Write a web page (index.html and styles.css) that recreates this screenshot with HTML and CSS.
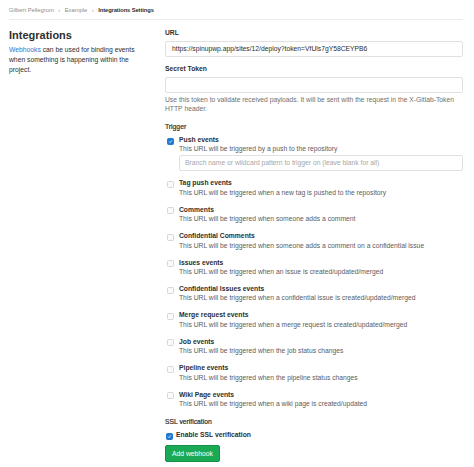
FILE: index.html
```html
<!DOCTYPE html>
<html lang="en">
<head>
    <meta charset="UTF-8">
    <meta name="viewport" content="width=device-width, initial-scale=1.0">
    <title>Integrations Settings</title>
    <link rel="stylesheet" href="styles.css">
</head>
<body>
    <div class="page">
        <div class="breadcrumb">
            <span>Gilbert Pellegrom</span>
            <span class="sep">›</span>
            <span>Example</span>
            <span class="sep">›</span>
            <span class="current">Integrations Settings</span>
        </div>

        <div class="layout">
            <div class="intro">
                <h1 class="title">Integrations</h1>
                <p class="lead"><a href="#">Webhooks</a> can be used for binding events when something is happening within the project.</p>
            </div>

            <form class="form">
                <label class="label strong">URL</label>
                <div class="input">https://spinupwp.app/sites/12/deploy?token=VfUls7gY58CEYPB6</div>

                <label class="label strong gap">Secret Token</label>
                <div class="input"></div>
                <p class="help">Use this token to validate received payloads. It will be sent with the request in the X-Gitlab-Token HTTP header.</p>

                <label class="label section">Trigger</label>

                <div class="event first">
                    <span class="box checked"><svg viewBox="0 0 8 8"><path d="M1.8 4.2 L3.3 5.7 L6.3 2.3" fill="none" stroke="#fff" stroke-width="1.3"/></svg></span>
                    <div class="event-body">
                        <div class="event-name">Push events</div>
                        <div class="event-desc">This URL will be triggered by a push to the repository</div>
                        <div class="input branch">Branch name or wildcard pattern to trigger on (leave blank for all)</div>
                    </div>
                </div>

                <div class="event">
                    <span class="box"></span>
                    <div class="event-body">
                        <div class="event-name">Tag push events</div>
                        <div class="event-desc">This URL will be triggered when a new tag is pushed to the repository</div>
                    </div>
                </div>

                <div class="event">
                    <span class="box"></span>
                    <div class="event-body">
                        <div class="event-name">Comments</div>
                        <div class="event-desc">This URL will be triggered when someone adds a comment</div>
                    </div>
                </div>

                <div class="event">
                    <span class="box"></span>
                    <div class="event-body">
                        <div class="event-name">Confidential Comments</div>
                        <div class="event-desc">This URL will be triggered when someone adds a comment on a confidential issue</div>
                    </div>
                </div>

                <div class="event">
                    <span class="box"></span>
                    <div class="event-body">
                        <div class="event-name">Issues events</div>
                        <div class="event-desc">This URL will be triggered when an issue is created/updated/merged</div>
                    </div>
                </div>

                <div class="event">
                    <span class="box"></span>
                    <div class="event-body">
                        <div class="event-name">Confidential Issues events</div>
                        <div class="event-desc">This URL will be triggered when a confidential issue is created/updated/merged</div>
                    </div>
                </div>

                <div class="event">
                    <span class="box"></span>
                    <div class="event-body">
                        <div class="event-name">Merge request events</div>
                        <div class="event-desc">This URL will be triggered when a merge request is created/updated/merged</div>
                    </div>
                </div>

                <div class="event">
                    <span class="box"></span>
                    <div class="event-body">
                        <div class="event-name">Job events</div>
                        <div class="event-desc">This URL will be triggered when the job status changes</div>
                    </div>
                </div>

                <div class="event">
                    <span class="box"></span>
                    <div class="event-body">
                        <div class="event-name">Pipeline events</div>
                        <div class="event-desc">This URL will be triggered when the pipeline status changes</div>
                    </div>
                </div>

                <div class="event">
                    <span class="box"></span>
                    <div class="event-body">
                        <div class="event-name">Wiki Page events</div>
                        <div class="event-desc">This URL will be triggered when a wiki page is created/updated</div>
                    </div>
                </div>

                <label class="label section ssl">SSL verification</label>
                <div class="ssl-row">
                    <span class="box checked"><svg viewBox="0 0 8 8"><path d="M1.8 4.2 L3.3 5.7 L6.3 2.3" fill="none" stroke="#fff" stroke-width="1.3"/></svg></span>
                    <span class="event-name">Enable SSL verification</span>
                </div>

                <button class="btn" type="submit">Add webhook</button>
            </form>
        </div>
    </div>
</body>
</html>
```

FILE: styles.css
```css
body{
    margin: 0;
    background-color: #fff;
    font-family: "Liberation Sans", Arial, sans-serif;
    font-size: 6.75px;
    color: #2e2e2e;
}

.page{
    padding: 0 11px 0 9px;
}

.breadcrumb{
    height: 19px;
    display: flex;
    align-items: center;
    gap: 4.5px;
    color: #8c8c8c;
    font-size: 5.8px;
    border-bottom: 1px solid #ececec;
}

.breadcrumb .sep{
    color: #a8a8a8;
}

.breadcrumb .current{
    color: #2e2e2e;
    font-weight: bold;
    letter-spacing: -0.1px;
}

.layout{
    display: grid;
    grid-template-columns: 140px 1fr;
    column-gap: 16px;
    padding-top: 8px;
}

.title{
    margin: 0;
    font-size: 11px;
    font-weight: 600;
    line-height: 14px;
}

.lead{
    margin: 3px 0 0;
    line-height: 10px;
}

.lead a{
    color: #1f78d1;
    text-decoration: none;
}

.form{
    display: flex;
    flex-direction: column;
}

.label{
    display: block;
    font-weight: bold;
    line-height: 10px;
    margin-bottom: 3px;
}

.label.gap{
    margin-top: 7px;
}

.label.section{
    margin-top: 9px;
    font-weight: normal;
    -webkit-text-stroke: 0.2px #2e2e2e;
}

.input{
    height: 14px;
    border: 1px solid #e1e1e1;
    border-radius: 2px;
    padding: 0 6px;
    line-height: 14px;
    white-space: nowrap;
    overflow: hidden;
}

.help{
    margin: 2px 0 0;
    color: #707070;
    line-height: 9px;
}

.event{
    display: flex;
    align-items: flex-start;
    margin-top: 7.6px;
}

.event.first{
    margin-top: 0;
}

.box{
    flex: none;
    width: 5px;
    height: 5px;
    margin: 2.5px 5px 0 2px;
    border: 1px solid #d6d6d6;
    border-radius: 1.5px;
    background-color: #fafafa;
    display: flex;
}

.box.checked{
    background-color: #1f78d1;
    border-color: #1f78d1;
}

.box svg{
    width: 100%;
    height: 100%;
}

.event-body{
    flex: 1;
    min-width: 0;
}

.event-name{
    font-weight: bold;
    line-height: 9.4px;
}

.event-desc{
    color: #5c5c5c;
    line-height: 9.4px;
}

.input.branch{
    margin-top: 1px;
    color: #a7a7a7;
    padding-left: 5px;
}

.ssl{
    margin-top: 6px;
}

.ssl-row{
    display: flex;
    align-items: flex-start;
    margin-top: 0;
}

.ssl-row .box{
    margin-left: 1px;
    margin-right: 3px;
}

.btn{
    align-self: flex-start;
    margin-top: 5px;
    height: 17px;
    padding: 0 6px;
    border: 1px solid #168f48;
    border-radius: 2px;
    background-color: #1aaa55;
    color: #fff;
    font-family: inherit;
    font-size: 6.75px;
    cursor: pointer;
}
```
